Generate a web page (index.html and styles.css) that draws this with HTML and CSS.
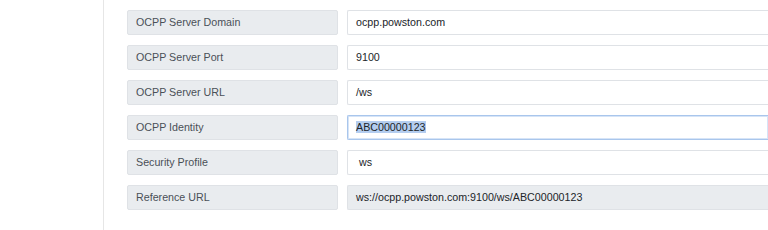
FILE: index.html
```html
<!doctype html>
<html lang="en">
<head>
    <meta charset="UTF-8">
    <meta name="viewport" content="width=device-width, initial-scale=1.0">
    <title>OCPP Settings</title>
    <link rel="stylesheet" href="styles.css">
</head>
<body>
<div class="page">
    <div class="panel">
        <div class="row">
            <div class="label">OCPP Server Domain</div>
            <div class="field">ocpp.powston.com</div>
        </div>
        <div class="row">
            <div class="label">OCPP Server Port</div>
            <div class="field">9100</div>
        </div>
        <div class="row">
            <div class="label">OCPP Server URL</div>
            <div class="field">/ws</div>
        </div>
        <div class="row">
            <div class="label">OCPP Identity</div>
            <div class="field focus"><span class="sel">ABC00000123</span></div>
        </div>
        <div class="row">
            <div class="label">Security Profile</div>
            <div class="field select">ws</div>
        </div>
        <div class="row">
            <div class="label">Reference URL</div>
            <div class="field readonly">ws://ocpp.powston.com:9100/ws/ABC00000123</div>
        </div>
    </div>
</div>
</body>
</html>
```

FILE: styles.css
```css
html, body {
    margin: 0;
    padding: 0;
    background: #fff;
    overflow: hidden;
}

body {
    font-family: "Liberation Sans", Arial, sans-serif;
    font-size: 10.7px;
}

.page {
    padding-left: 103px;
    height: 230px;
    display: flex;
}

.panel {
    flex: 1;
    border-left: 1px solid #e6e6e6;
    padding: 10px 0 0 23px;
}

.row {
    display: flex;
    height: 25px;
    margin-bottom: 10px;
}

.label {
    width: 211px;
    flex: none;
    box-sizing: border-box;
    background: #e9ecef;
    border: 1px solid #dfe2e6;
    border-radius: 2px;
    color: #495057;
    padding-left: 8px;
    line-height: 23px;
}

.field {
    margin-left: 9px;
    flex: 1;
    box-sizing: border-box;
    border: 1px solid #dfe2e6;
    border-right: 0;
    border-radius: 2px 0 0 2px;
    color: #212529;
    padding-left: 8px;
    line-height: 23px;
    background: #fff;
}

.field.focus {
    border-color: #a9c6ec;
    box-shadow: inset 0 0 0 1px #d6e4f7;
}

.sel {
    background: #b4cdef;
}

.field.select {
    padding-left: 11px;
}

.field.readonly {
    background: #e9ecef;
}
```
